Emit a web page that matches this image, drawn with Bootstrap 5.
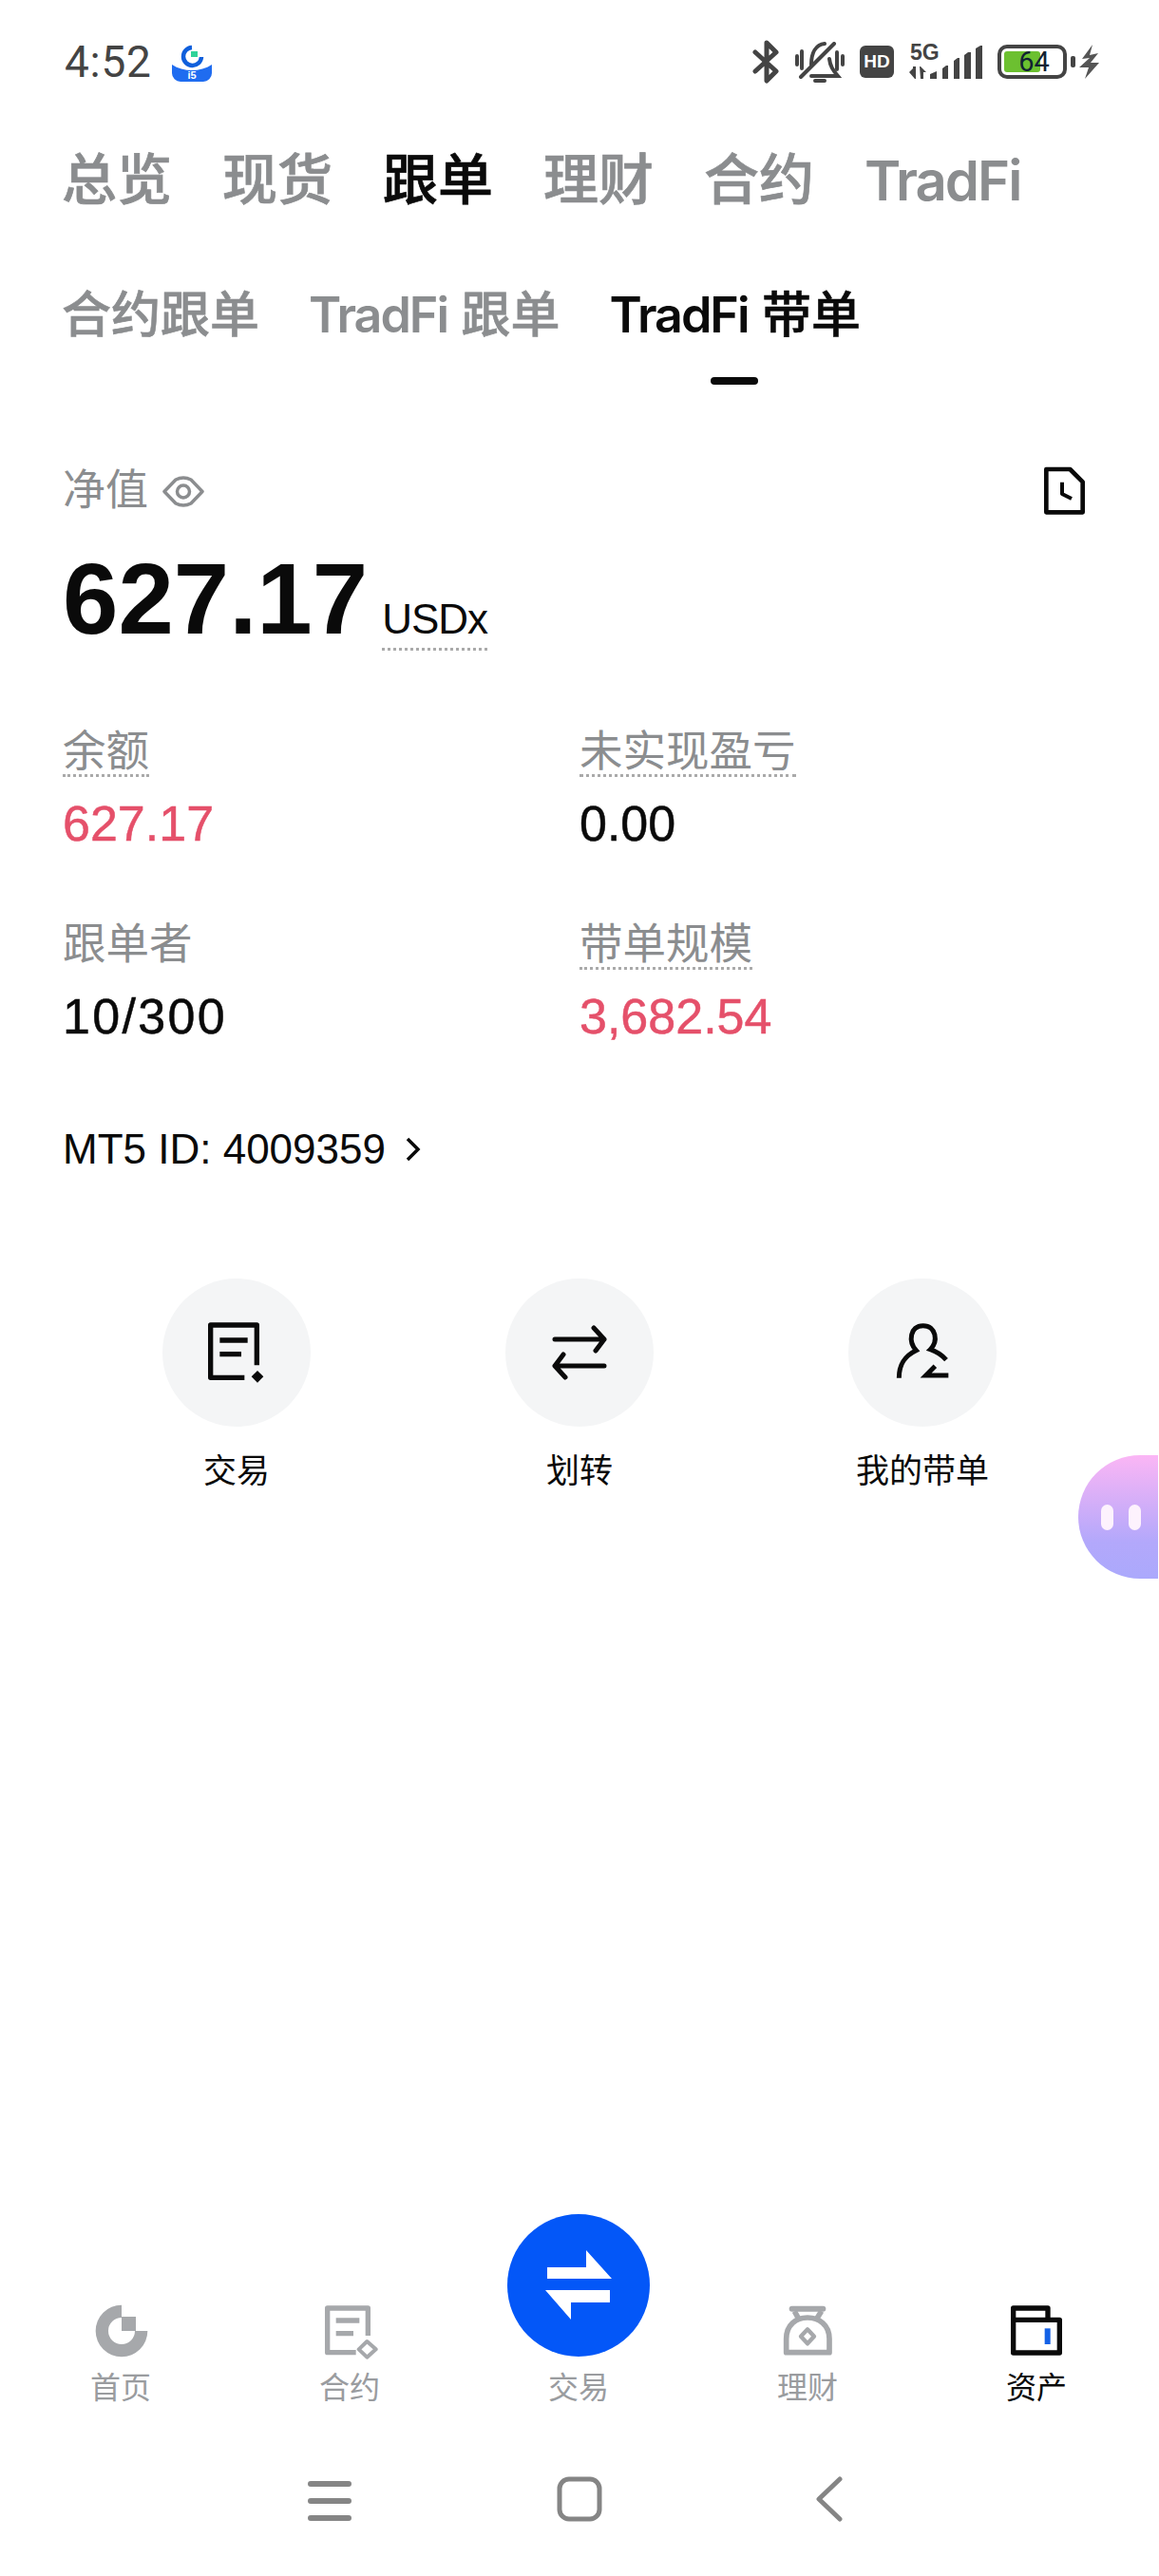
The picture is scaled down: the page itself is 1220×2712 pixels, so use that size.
<!DOCTYPE html>
<html lang="zh-CN">
<head>
    <meta charset="UTF-8">
    <title>TradFi 带单</title>
    <link href="https://cdn.jsdelivr.net/npm/bootstrap@5.3.0/dist/css/bootstrap.min.css" rel="stylesheet">
    <style>
        body {
          width: 1220px;
          min-height: 2712px;
          background: #fff;
          color: #0a0a0a;
          font-family: "Liberation Sans", "Noto Sans CJK SC", sans-serif;
          position: relative;
          overflow-x: hidden;
        }
        .status-bar { height: 130px; padding: 0 63px 0 68px; color: #444; }
        .status-left { gap: 21px; }
        .status-time { font-family: Roboto, sans-serif; font-size: 46px; line-height: 1; letter-spacing: .7px; }
        .hd-box { width: 36px; height: 34px; background: #444; color: #fff; border-radius: 6px; font-size: 19px; font-weight: 700; line-height: 34px; text-align: center; }
        .sig-icon { margin-top: -6px; }
        .batt-box { position: relative; width: 73px; height: 36px; border: 4px solid #444; border-radius: 10px; font-family: Roboto, sans-serif; font-size: 29px; line-height: 28px; color: #123; text-align: center; padding-left: 4px; }
        .batt-fill { position: absolute; left: 3px; top: 3px; bottom: 3px; width: 38px; background: #6cc030; border-radius: 3px; }
        .batt-num { position: relative; }

        .main-tabs { margin-top: 20px; padding: 0 65px; gap: 53px; font-size: 58px; line-height: 80px; font-weight: 500; color: #8b8d8f; -webkit-text-stroke: .7px currentColor; }
        .sub-tabs { margin-top: 67px; padding: 0 65px; gap: 52px; font-size: 52px; line-height: 70px; font-weight: 500; color: #8b8d8f; -webkit-text-stroke: .6px currentColor; }
        .tab-latin { font-family: Inter, sans-serif; font-weight: 600; letter-spacing: -2px; -webkit-text-stroke: 0; }
        .tab-on { color: #0a0a0a; position: relative; }
        .sub-tabs .tab-on::after { content: ""; position: absolute; left: 106px; bottom: -38px; width: 50px; height: 8px; border-radius: 4px; background: #0a0a0a; }

        .page-body { padding: 0 66px; }
        .equity-row { margin-top: 120px; height: 60px; color: #8b8d8f; font-size: 45px; line-height: 60px; }
        .equity-left { gap: 15px; }
        .doc-icon { margin: -4px -4px 0 0; }
        .equity-num { margin-top: 29px; line-height: 110px; }
        .equity-num b { font-size: 105px; }
        .equity-unit { font-size: 44px; margin-left: 15px; letter-spacing: -1px; border-bottom: 3px dotted #aaa; line-height: 44px; padding-bottom: 8px; }
        .stat-label { color: #8b8d8f; font-size: 45.500px; line-height: 60px; }
        .stat-dotted { border-bottom: 3px dotted #aaa; line-height: 46px; display: inline-block; }
        .stat-val { font-size: 52px; line-height: 60px; margin-top: 15px; -webkit-text-stroke: .5px currentColor; }
        .stat-wide { letter-spacing: 2.300px; }
        .stat-red { color: #e5506a; }
        .stat-row { margin-top: 76px; }
        .stat-row2 { margin-top: 68px; }
        .mt-line { margin-top: 80px; font-size: 44px; line-height: 60px; gap: 20px; }

        .act-row { margin: 106px 2.5px 0; }
        .act-circle { width: 156px; height: 156px; border-radius: 50%; background: #f4f5f6; }
        .act-label { font-size: 35px; line-height: 50px; margin-top: 22px; }

        .chat-blob { position: absolute; left: 1135px; top: 1532px; width: 84px; height: 130px; border-radius: 65px 0 0 65px; background: linear-gradient(180deg, #fbb6f5, #b3a8fb 70%, #aba9fc); }
        .blob-eye { width: 13px; height: 27px; border-radius: 7px; background: #fdf2fd; }

        .tab-bar { padding: 0 6.5px; }
        .tab-item { width: 241px; color: #9a9c9f; font-size: 32px; line-height: 44px; }
        .tab-item svg { display: block; }
        .tab-text { margin-top: 8px; }
        .tab-dark { color: #0a0a0a; }
        .trade-circle { width: 150px; height: 150px; border-radius: 50%; background: #0357f8; margin-bottom: 3px; }
        .key-bar { height: 176px; padding-bottom: 57px; }
        .key-slot { width: 263px; }
    </style>
</head>
<body class="d-flex flex-column">

<!-- Status bar -->
<div class="status-bar d-flex align-items-center justify-content-between">
    <div class="status-left d-flex align-items-center">
        <span class="status-time">4:52</span>
        <svg width="42" height="42" viewBox="0 0 42 42">
            <path d="M0 24c12 8 30 8 42 0v9a9 9 0 0 1-9 9H9a9 9 0 0 1-9-9z" fill="#1f6cf0"/>
            <path d="M21 6a9.500 9.500 0 1 0 10 10" fill="none" stroke="#0f5fdc" stroke-width="4.500"/>
            <rect x="20" y="10" width="7" height="6" fill="#2fd39a"/>
            <text x="21" y="39" font-size="11" font-weight="700" fill="#fff" text-anchor="middle">i5</text>
        </svg>
    </div>
    <div class="d-flex align-items-center">
        <svg width="29" height="46" viewBox="0 0 29 46" fill="none" stroke="#444" stroke-width="5" stroke-linecap="round" stroke-linejoin="round">
            <path d="M3 13l22 20-10 10V3l10 10L3 33"/>
        </svg>
        <svg class="ms-3" width="52" height="43" viewBox="0 0 52 43" fill="none" stroke="#444" stroke-width="4" stroke-linecap="round">
            <path d="M6 37L41 2"/>
            <path d="M17 24c0-13 5-21 14-22M36 18c1 9 5 13 9 18H17"/>
            <path d="M21 41h10M2 15v9M7 10v18M44 11v18M50 15v9"/>
        </svg>
        <div class="hd-box ms-3">HD</div>
        <svg class="sig-icon ms-3" width="77" height="46" viewBox="0 0 77 46">
            <text x="1" y="24" font-size="23" font-weight="700" fill="#444">5G</text>
            <path transform="translate(0 6)" d="M0 31l4-4v-2h3v13h-1zM11 25h1l6 6h-3v7h-3zM22 33l7-3v8h-7zM35 27l4-3h2v14h-6zM47 19l4-3h2v22h-6zM58 13l4-3h3v28h-7zM70 6l5-3h2v35h-7z" fill="#444"/>
        </svg>
        <div class="batt-box ms-3"><div class="batt-fill"></div><span class="batt-num">64</span></div>
        <svg class="ms-1" width="5" height="12" viewBox="0 0 5 12"><rect width="5" height="12" rx="2" fill="#444"/></svg>
        <svg class="ms-1" width="21" height="36" viewBox="0 0 21 36"><path d="M14 0L3 15l8-1L0 24h10L6 36l15-17h-9l8-10-9 2z" fill="#555"/></svg>
    </div>
</div>

<!-- Tabs -->
<div class="main-tabs d-flex">
    <span>总览</span><span>现货</span><span class="tab-on">跟单</span><span>理财</span><span>合约</span><span class="tab-latin">TradFi</span>
</div>
<div class="sub-tabs d-flex">
    <span>合约跟单</span><span><span class="tab-latin">TradFi</span> 跟单</span><span class="tab-on"><span class="tab-latin">TradFi</span> 带单</span>
</div>

<!-- Account -->
<div class="page-body flex-grow-1">
    <div class="equity-row d-flex align-items-center justify-content-between">
        <div class="equity-left d-flex align-items-center">
            <span>净值</span>
            <svg width="44" height="33" viewBox="0 0 44 33" fill="none" stroke="#8b8d8f" stroke-width="3.500" stroke-linejoin="round">
                <path d="M2 16.500L14 4q8-4 16 0l12 12.500L30 29q-8 4-16 0z"/>
                <circle cx="22" cy="16.500" r="6.500"/>
            </svg>
        </div>
        <svg class="doc-icon" width="70" height="70" viewBox="0 0 210 210" fill="none" stroke="#0a0a0a" stroke-width="14" stroke-linejoin="round">
            <path d="M40 42h75l40 40v96H40z"/>
            <path d="M90 83v37l30 15" stroke-width="12"/>
        </svg>
    </div>
    <div class="equity-num d-flex align-items-baseline">
        <b>627.17</b><span class="equity-unit">USDx</span>
    </div>

    <div class="stat-row row g-0">
        <div class="col-6">
            <div class="stat-label"><span class="stat-dotted">余额</span></div>
            <div class="stat-val stat-red">627.17</div>
        </div>
        <div class="col-6">
            <div class="stat-label"><span class="stat-dotted">未实现盈亏</span></div>
            <div class="stat-val">0.00</div>
        </div>
    </div>
    <div class="stat-row2 row g-0">
        <div class="col-6">
            <div class="stat-label">跟单者</div>
            <div class="stat-val stat-wide">10/300</div>
        </div>
        <div class="col-6">
            <div class="stat-label"><span class="stat-dotted">带单规模</span></div>
            <div class="stat-val stat-red">3,682.54</div>
        </div>
    </div>

    <div class="mt-line d-flex align-items-center">
        <span>MT5 ID: 4009359</span>
        <svg width="18" height="28" viewBox="0 0 18 28" fill="none" stroke="#0a0a0a" stroke-width="3.500"><path d="M3 3l11 11L3 25"/></svg>
    </div>

    <div class="act-row row g-0 text-center">
        <div class="col-4 d-flex flex-column align-items-center">
            <div class="act-circle d-flex align-items-center justify-content-center">
                <svg width="100" height="90" viewBox="0 0 300 270" fill="none" stroke="#0a0a0a" stroke-width="16" stroke-linejoin="round">
                    <path d="M175 214H68V48h146v127"/>
                    <path d="M97 96h88M97 140h68"/>
                    <path d="M216 192l19 19-19 19-19-19z" fill="#0a0a0a" stroke="none"/>
                </svg>
            </div>
            <div class="act-label">交易</div>
        </div>
        <div class="col-4 d-flex flex-column align-items-center">
            <div class="act-circle d-flex align-items-center justify-content-center">
                <svg width="60" height="58" viewBox="0 0 60 58" fill="none" stroke="#0a0a0a" stroke-width="5" stroke-linecap="round" stroke-linejoin="round">
                    <path d="M4 15h52L45 3M56 15L47 27"/>
                    <path d="M56 43H4L15 55M4 43l9-12"/>
                </svg>
            </div>
            <div class="act-label">划转</div>
        </div>
        <div class="col-4 d-flex flex-column align-items-center">
            <div class="act-circle d-flex align-items-center justify-content-center">
                <svg width="100" height="90" viewBox="0 0 300 270" fill="none" stroke="#0a0a0a" stroke-width="15">
                    <path d="M76 215c0-45 19-70 54-87-25-28-20-78 22-78s48 50 23 75c20 7 37 18 50 33"/>
                    <path d="M190 178l-29 29h71"/>
                </svg>
            </div>
            <div class="act-label">我的带单</div>
        </div>
    </div>
</div>

<!-- Floating assistant -->
<div class="chat-blob d-flex align-items-center gap-3 ps-4">
    <div class="blob-eye"></div><div class="blob-eye"></div>
</div>

<!-- Bottom tabs -->
<div class="tab-bar d-flex align-items-end text-center">
    <div class="tab-item d-flex flex-column align-items-center">
        <svg width="60" height="60" viewBox="20 20 180 180" fill="#a6a8ab">
            <path d="M113 28A82 82 0 1 0 195 110H155A42 42 0 1 1 113 68z"/>
            <rect x="113" y="65" width="45" height="45"/>
        </svg>
        <div class="tab-text">首页</div>
    </div>
    <div class="tab-item d-flex flex-column align-items-center">
        <svg width="60" height="60" viewBox="745 20 180 180" fill="none" stroke="#a6a8ab" stroke-width="16" stroke-linejoin="round">
            <path d="M855 178H765V38h128v87"/>
            <path d="M792 77h74M792 118h55"/>
            <path d="M890 143l28 25-28 25-26-25z" stroke-width="12"/>
        </svg>
        <div class="tab-text">合约</div>
    </div>
    <div class="tab-item d-flex flex-column align-items-center">
        <div class="trade-circle d-flex align-items-center justify-content-center">
            <svg width="70" height="74" viewBox="0 0 70 74"><path d="M2 18h41V0l27 30H2zM0 42h68v13H27v18z" fill="#fff"/></svg>
        </div>
        <div class="tab-text">交易</div>
    </div>
    <div class="tab-item d-flex flex-column align-items-center">
        <svg width="60" height="60" viewBox="31 20 180 180" fill="none" stroke="#a6a8ab" stroke-width="17" stroke-linejoin="round" stroke-linecap="round">
            <path d="M72 40h98" stroke-width="18"/>
            <path d="M80 48l15 27M165 48l-17 27" stroke-linecap="butt"/>
            <path d="M54 178v-43c0-45 31-67 67-67s69 22 69 67v43z"/>
            <path d="M121 105l21 22-21 23-21-23z" stroke-width="13"/>
        </svg>
        <div class="tab-text">理财</div>
    </div>
    <div class="tab-item tab-dark d-flex flex-column align-items-center">
        <svg width="60" height="60" viewBox="754 20 180 180" fill="none" stroke="#0a0a0a" stroke-width="16" stroke-linejoin="round">
            <path d="M771 75V38h109v37"/>
            <path d="M771 75h146v104H771z"/>
            <rect x="870" y="102" width="18" height="50" fill="#1562e6" stroke="none"/>
        </svg>
        <div class="tab-text">资产</div>
    </div>
</div>

<!-- System keys -->
<div class="key-bar d-flex align-items-end justify-content-center">
    <div class="key-slot d-flex justify-content-center">
        <svg width="46" height="44" viewBox="0 0 46 44" fill="none" stroke="#858585" stroke-width="6" stroke-linecap="round"><path d="M3 4h40M3 22h40M3 40h40"/></svg>
    </div>
    <div class="key-slot d-flex justify-content-center">
        <svg width="48" height="48" viewBox="0 0 48 48" fill="none" stroke="#858585" stroke-width="5"><rect x="3" y="3" width="42" height="42" rx="10"/></svg>
    </div>
    <div class="key-slot d-flex justify-content-center">
        <svg width="30" height="48" viewBox="0 0 30 48" fill="none" stroke="#858585" stroke-width="5" stroke-linecap="round" stroke-linejoin="round"><path d="M26 3L4 24l22 21"/></svg>
    </div>
</div>

<script src="https://cdn.jsdelivr.net/npm/bootstrap@5.3.0/dist/js/bootstrap.bundle.min.js"></script>
</body>
</html>
